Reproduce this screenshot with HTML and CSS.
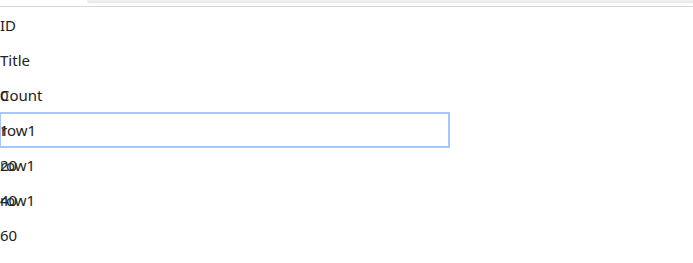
FILE: index.html
```html
<!DOCTYPE html>
<html>
<head>
<meta charset="utf-8">
<link rel="stylesheet" href="styles.css">
</head>
<body>
<div class="topbar"><div class="tab"></div></div>
<div class="stack">
  <div class="list">
    <div class="row">ID</div>
    <div class="row">Title</div>
    <div class="row">Count</div>
    <div class="row"><input class="edit" value="row1"></div>
    <div class="row">row1</div>
    <div class="row">row1</div>
  </div>
  <div class="list offset">
    <div class="row">0</div>
    <div class="row">1</div>
    <div class="row">20</div>
    <div class="row">40</div>
    <div class="row">60</div>
  </div>
</div>
</body>
</html>
```
FILE: styles.css
```css
html, body {
  margin: 0;
  padding: 0;
  background: #fff;
}
body {
  font-family: "Noto Sans", "Open Sans", sans-serif;
  font-size: 15px;
  color: #222;
}
.topbar {
  height: 6px;
  border-bottom: 1px solid #d6d6d6;
}
.tab {
  margin-left: 87px;
  height: 2px;
  background: #efefef;
  border-bottom-left-radius: 4px;
  box-shadow: 0 1px 1px #e6e6e6;
}
.stack {
  display: grid;
}
.list {
  grid-area: 1 / 1;
  display: flex;
  flex-direction: column;
}
.offset {
  padding-top: 70px;
}
.row {
  height: 35px;
  display: flex;
  align-items: center;
}
.edit {
  box-sizing: border-box;
  width: 450px;
  height: 36px;
  margin: 0;
  padding: 0;
  border: 2px solid #a6c6ff;
  border-left-width: 1px;
  font: inherit;
  color: #222;
  outline: none;
  background: transparent;
}
```
